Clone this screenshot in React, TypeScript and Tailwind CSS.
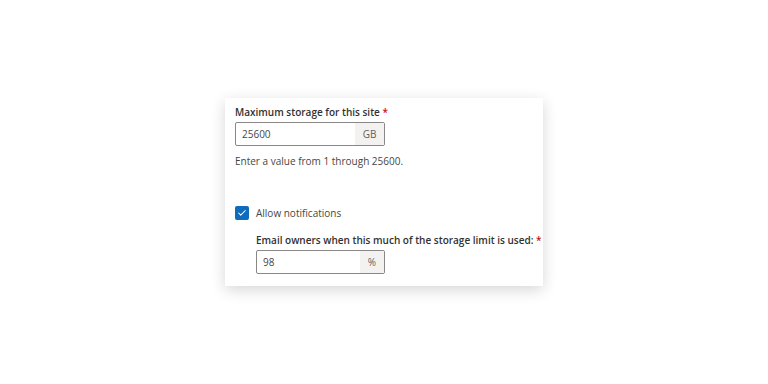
import { Check } from 'lucide-react';

export default function App() {
  return (
    <div className="w-[768px] h-[384px] bg-white flex items-start justify-center pt-[98px]" style={{ fontFamily: '"Open Sans", "Noto Sans", sans-serif' }}>
      <div className="w-[318px] h-[188px] bg-white shadow-[0_4px_14px_rgba(0,0,0,0.16)] px-[10px] pt-[6px]">
        <div className="text-[10px] leading-[16px] font-semibold text-[#323130]">
          Maximum storage for this site <span className="text-[#c50f1f]">*</span>
        </div>
        <div className="mt-[2px] w-[150px] h-[24px] flex border border-[#8a8886] rounded-[2px] overflow-hidden">
          <div className="flex-1 pl-[6px] text-[10px] leading-[22px] text-[#484644]">25600</div>
          <div className="w-[29px] bg-[#f3f2f1] text-[10px] leading-[22px] text-[#605e5c] text-center">GB</div>
        </div>
        <div className="mt-[8px] text-[10px] leading-[14px] text-[#484644]">Enter a value from 1 through 25600.</div>

        <div className="mt-[38px] flex items-center gap-[7px]">
          <div className="w-[14px] h-[14px] rounded-[2px] bg-[#0f6cbd] flex items-center justify-center">
            <Check className="w-[10px] h-[10px] text-white" strokeWidth={2.5} />
          </div>
          <span className="text-[10px] leading-[14px] text-[#484644]">Allow notifications</span>
        </div>

        <div className="ml-[21px] mt-[12px]">
          <div className="whitespace-nowrap text-[10px] leading-[16px] font-semibold text-[#323130]">
            Email owners when this much of the storage limit is used: <span className="text-[#c50f1f]">*</span>
          </div>
          <div className="mt-[2px] w-[129px] h-[24px] flex border border-[#8a8886] rounded-[2px] overflow-hidden">
            <div className="flex-1 pl-[6px] text-[10px] leading-[22px] text-[#484644]">98</div>
            <div className="w-[24px] bg-[#f3f2f1] text-[10px] leading-[22px] text-[#605e5c] text-center">%</div>
          </div>
        </div>
      </div>
    </div>
  );
}
